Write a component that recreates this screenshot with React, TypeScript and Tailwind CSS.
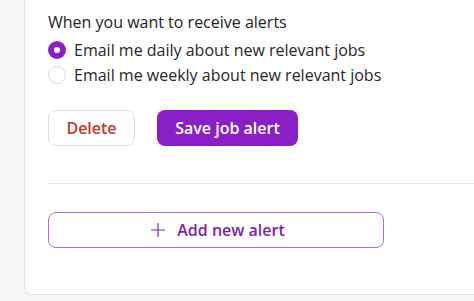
import { Plus } from "lucide-react";

export default function App() {
    return (
        <div className="w-[474px] h-[301px] overflow-hidden bg-[#f6f6f8] pl-6 font-['Open_Sans',sans-serif]">
            <div className="w-[520px] bg-white border-l border-b border-[#e3e3e8] rounded-bl-lg pl-[23px] pt-[10px] pb-[46px]">
                <h3 className="text-base leading-6 font-medium text-[#222222]">When you want to receive alerts</h3>

                <div className="mt-[4px] flex flex-col gap-px">
                    <label className="flex items-center gap-2 h-6 text-base text-[#262626]">
                        <span className="w-[18px] h-[18px] rounded-full bg-[#8a1fc5] flex items-center justify-center">
                            <span className="w-[6px] h-[6px] rounded-full bg-white" />
                        </span>
                        Email me daily about new relevant jobs
                    </label>
                    <label className="flex items-center gap-2 h-6 text-base text-[#262626]">
                        <span className="w-[18px] h-[18px] rounded-full border border-[#d9d9de] bg-white" />
                        Email me weekly about new relevant jobs
                    </label>
                </div>

                <div className="mt-[23px] flex gap-[22px]">
                    <button className="h-9 w-[87px] rounded-lg border border-[#dcdce0] bg-white text-base font-semibold text-[#c0392b]">
                        Delete
                    </button>
                    <button className="h-9 w-[141px] rounded-lg bg-[#8a1fc5] text-base font-semibold text-white">
                        Save job alert
                    </button>
                </div>

                <div className="mt-[37px] border-t border-[#dedee3]" />

                <button className="mt-7 h-9 w-[336px] rounded-lg border border-[#b565d8] bg-white flex items-center justify-center gap-2 text-base font-semibold text-[#7c1fb0]">
                    <Plus size={22} strokeWidth={1.3} />
                    Add new alert
                </button>
            </div>
        </div>
    );
}
